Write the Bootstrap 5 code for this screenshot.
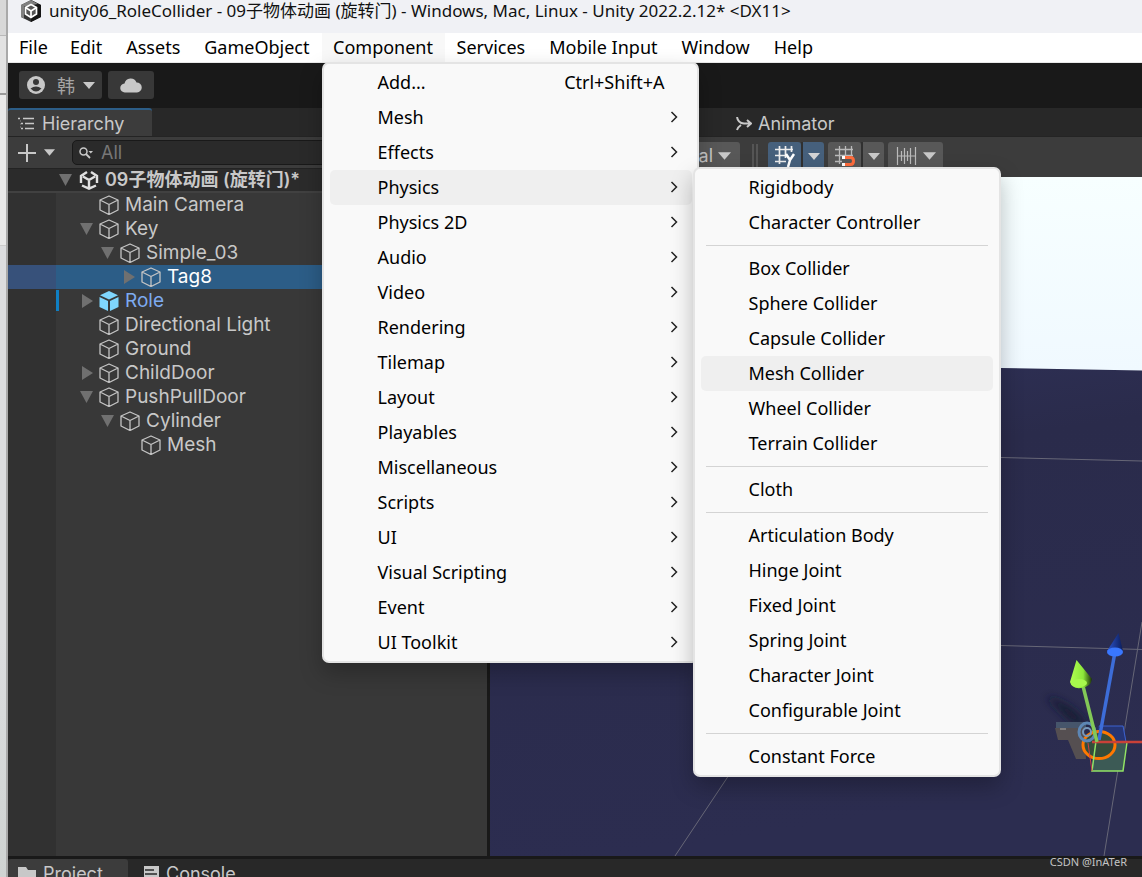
<!DOCTYPE html>
<html lang="en">
<head>
<meta charset="utf-8">
<meta name="viewport" content="width=device-width, initial-scale=1">
<title>unity06_RoleCollider - Unity</title>
<link href="https://cdn.jsdelivr.net/npm/bootstrap@5.3.0/dist/css/bootstrap.min.css" rel="stylesheet">
<style>
  body { font-family: "Noto Sans", "Noto Sans CJK SC", sans-serif; font-size: 18px; line-height: 24px; color: #000; background: #dcdddd; }
  .desktop-edge { width: 8px; background: linear-gradient(90deg, transparent 6px, #a9a9a9 6px), linear-gradient(#d8d8d8 0 35px, #b9b9b9 35px 36px, #e2e2e2 36px 93px, #999 93px 95px, #e9e9e9 95px 245px, #ccc 245px 246px, #dcdddf 246px 640px, #cfd3d2); }
  .editor { background: #191919; color: #c8c8c8; min-width: 0; }
  .titlebar { height: 33px; background: #f0f1f5; color: #111; font-size: 17px; padding: 0 12px 12px 12px; gap: 7px; }
  .menubar { height: 30px; background: #fff; border-bottom: 1px solid #e8e8e8; z-index: 10; }
  .menubar > li { position: relative; }
  .menubar > li > .menu-title { height: 29px; line-height: 24px; padding: 0 12px 2px; border: 0; background: none; color: #000; white-space: nowrap; }
  .menubar > li > .menu-title.active { background: #f8f8f8; width: 123px; padding: 0 11px 2px; }
  .menubar > .menu-first { width: 50px; }
  .menubar > .menu-first > .menu-title { padding: 0 11px 2px; }
  .popup { background: #f9f9f9; border: 2px solid #e4e4e4; border-radius: 7px; box-shadow: 0 10px 22px rgba(0,0,0,.25); margin: 0; list-style: none; color: #000; position: absolute; }
  .popup-main { top: 29px; left: 0; width: 377px; padding: 1px 5px 1px 6px; }
  .popup-sub { top: -3px; left: 100%; width: 308px; margin-left: 1px; padding: 1px 6px; }
  .popup li { position: relative; }
  .popup .entry { display: flex; align-items: center; justify-content: space-between; width: 100%; height: 35px; border: 0; border-radius: 5px; background: none; color: #000; padding: 0 14px 2px 48px; text-align: left; }
  .popup .entry.on { background: #efefef; }
  .popup .keys { margin-right: 13px; }
  .popup hr { margin: 5px 5px; border: 0; border-top: 1px solid #d4d4d4; opacity: 1; }
  .strip { height: 45px; padding: 8px 11px 8px 11px; gap: 6px; }
  .dark-btn { height: 28px; background: #383838; border: 0; border-radius: 3px; color: #a5a5a5; padding: 0 7px 0 8px; font-family: "Noto Sans CJK SC", sans-serif; }
  .cloud-btn { width: 46px; padding: 0; }
  .panes { gap: 3px; min-height: 0; }
  .ui-font { font-family: Inter, "Noto Sans CJK SC", sans-serif; }
  .hierarchy { width: 479px; background: #383838; }
  .tab-row { height: 28px; background: #282828; }
  .tab-row button { border: 0; background: none; color: #c8c8c8; padding: 3px 10px 0; gap: 7px; height: 28px; }
  .tab-row .current { background: #3c3c3c; border-top: 2px solid #2c5d87; border-radius: 3px 3px 0 0; width: 144px; padding-top: 2px; }
  .tool-row { height: 33px; background: #3c3c3c; border-top: 1px solid #242424; border-bottom: 1px solid #232323; padding-left: 10px; }
  .plain-btn { border: 0; background: none; padding: 0; color: #c8c8c8; }
  .search-box { height: 25px; background: #2a2a2a; border: 1px solid #191919; border-radius: 5px; margin-left: 17px; padding-left: 6px; }
  .search-box input { border: 0; background: none; outline: 0; color: #c8c8c8; width: 100%; padding: 0; height: 20px; }
  .search-box input::placeholder { color: #777; opacity: 1; }
  .tree { margin: 0; padding: 0; list-style: none; font-size: 19px; background: linear-gradient(90deg, #313131 48px, #383838 48px); }
  .tree li { display: flex; align-items: center; height: 24px; white-space: nowrap; --d: 0; padding-left: calc(68px + var(--d) * 21px); }
  .tree li span { margin-left: 6px; }
  .tree .d2 { --d: 1; } .tree .d3 { --d: 2; }
  .tree svg { flex: none; }
  .tree .arrow { width: 20px; height: 14px; fill: #707070; }
  .tree .arrow + svg { margin-left: 3px; }
  .tree .scene-head { background: #2b2b2b; border-bottom: 2px solid #414141; font-weight: 600; font-size: 18px; padding-left: 47px; }
  .tree .scene-head .arrow + svg { margin-left: 4px; }
  .tree .picked { background: linear-gradient(90deg, #37517a 48px, #2c5d87 48px); color: #fff; }
  .tree .prefab { color: #7eabf0; background: linear-gradient(#0f7fc3, #0f7fc3) 48px 1px / 3px 21px no-repeat; }
  .scene-tabs { padding-left: 236px; }
  .scene-tabs button { gap: 6px; }
  .scene-tools { height: 41px; background: #3c3c3c; border-top: 1px solid #242424; padding: 5px 0 0 150px; }
  .scene-tools button { height: 28px; border: 0; border-radius: 3px; background: #585858; color: #c8c8c8; padding: 0; display: flex; align-items: center; justify-content: center; }
  .scene-tools .blue { background: #46607c; }
  .scene-tools .w-local { width: 100px; gap: 5px; justify-content: flex-end; padding-right: 9px; }
  .w-icon { width: 33px; }
  .scene-tools .w-drop { width: 23px; border-left: 2px solid #303030; border-radius: 0 3px 3px 0; }
  .w-ruler { width: 55px; gap: 6px; }
  .grip { width: 6px; height: 24px; border: 1px solid #555; border-width: 0 2px; margin: 2px 10px 0 12px; }
  .viewport { min-height: 0; background: #2c2d50; }
  .viewport svg { width: 100%; height: 100%; display: block; }
  .dock { height: 21px; border-top: 3px solid #191919; background: #282828; }
  .dock button { border: 0; background: none; color: #c8c8c8; height: 30px; padding: 0 10px; gap: 7px; }
  .dock .current { background: #3c3c3c; border-radius: 3px 3px 0 0; width: 120px; }
  .credit { right: 15px; bottom: 5px; font: 11px/20px "Noto Sans", sans-serif; color: #c4c4c4; }
</style>
</head>
<body class="d-flex vh-100 overflow-hidden">
<svg class="d-none">
  <symbol id="cube" viewBox="0 0 20 20"><path d="M10 1 19 5v10l-9 4.500L1 15V5zM1 5l9 4.500L19 5M10 9.500v10" fill="none" stroke="#c4c4c4" stroke-width="1.300" stroke-linejoin="round"/></symbol>
  <symbol id="down" viewBox="0 0 12 7"><path d="M0 0h12L6 7z"/></symbol>
  <symbol id="open" viewBox="0 0 20 14"><path d="M4 1h13l-6.500 12z"/></symbol>
  <symbol id="closed" viewBox="0 0 20 14"><path d="M6 0v14l11-7z"/></symbol>
  <symbol id="chev" viewBox="0 0 8 12"><path d="m1.500 1 5 5-5 5" fill="none" stroke="#222" stroke-width="1.500"/></symbol>
  <symbol id="unity" viewBox="0 0 20 20"><path d="M10 10v8M10 10 4 6.500M10 10l6-3.500M2 13V6l6-4M18 13V6l-6-4M3 15.500l7 3.200 7-3.200" fill="none" stroke="#e0e0e0" stroke-width="2.400"/></symbol>
</svg>
<div class="desktop-edge flex-shrink-0"></div>
<div class="editor flex-grow-1 d-flex flex-column">
  <header class="titlebar d-flex align-items-center flex-shrink-0">
    <svg width="22" height="24" viewBox="0 0 22 24"><path d="M11 1 21 6v12l-10 5L1 18V6z" fill="#333"/><path d="M11 1 21 6v12l-10 5z" fill="#151515"/><path d="M11 1 1 6v12l3 1.500V7.500L18 5z" fill="#808080"/><path d="m11 5.500 5.500 3v6.500L11 18.500 5.500 15V8.500z" fill="#555" stroke="#fff" stroke-width="1.700"/><path d="m5.500 8.500 5.500 3.500 5.500-3.500M11 12v6" fill="none" stroke="#fff" stroke-width="1.700"/></svg>
    <span class="text-nowrap">unity06_RoleCollider - 09子物体动画 (旋转门) - Windows, Mac, Linux - Unity 2022.2.12* &lt;DX11&gt;</span>
  </header>
  <ul class="menubar d-flex list-unstyled m-0 flex-shrink-0 position-relative">
    <li class="menu-first"><button class="menu-title">File</button></li>
    <li><button class="menu-title">Edit</button></li>
    <li><button class="menu-title">Assets</button></li>
    <li><button class="menu-title">GameObject</button></li>
    <li><button class="menu-title active">Component</button>
      <ul class="popup popup-main">
        <li><button class="entry">Add... <span class="keys">Ctrl+Shift+A</span></button></li>
        <li><button class="entry">Mesh <svg width="8" height="12"><use href="#chev"/></svg></button></li>
        <li><button class="entry">Effects <svg width="8" height="12"><use href="#chev"/></svg></button></li>
        <li><button class="entry on">Physics <svg width="8" height="12"><use href="#chev"/></svg></button>
          <ul class="popup popup-sub">
            <li><button class="entry">Rigidbody</button></li>
            <li><button class="entry">Character Controller</button></li>
            <li><hr></li>
            <li><button class="entry">Box Collider</button></li>
            <li><button class="entry">Sphere Collider</button></li>
            <li><button class="entry">Capsule Collider</button></li>
            <li><button class="entry on">Mesh Collider</button></li>
            <li><button class="entry">Wheel Collider</button></li>
            <li><button class="entry">Terrain Collider</button></li>
            <li><hr></li>
            <li><button class="entry">Cloth</button></li>
            <li><hr></li>
            <li><button class="entry">Articulation Body</button></li>
            <li><button class="entry">Hinge Joint</button></li>
            <li><button class="entry">Fixed Joint</button></li>
            <li><button class="entry">Spring Joint</button></li>
            <li><button class="entry">Character Joint</button></li>
            <li><button class="entry">Configurable Joint</button></li>
            <li><hr></li>
            <li><button class="entry">Constant Force</button></li>
          </ul>
        </li>
        <li><button class="entry">Physics 2D <svg width="8" height="12"><use href="#chev"/></svg></button></li>
        <li><button class="entry">Audio <svg width="8" height="12"><use href="#chev"/></svg></button></li>
        <li><button class="entry">Video <svg width="8" height="12"><use href="#chev"/></svg></button></li>
        <li><button class="entry">Rendering <svg width="8" height="12"><use href="#chev"/></svg></button></li>
        <li><button class="entry">Tilemap <svg width="8" height="12"><use href="#chev"/></svg></button></li>
        <li><button class="entry">Layout <svg width="8" height="12"><use href="#chev"/></svg></button></li>
        <li><button class="entry">Playables <svg width="8" height="12"><use href="#chev"/></svg></button></li>
        <li><button class="entry">Miscellaneous <svg width="8" height="12"><use href="#chev"/></svg></button></li>
        <li><button class="entry">Scripts <svg width="8" height="12"><use href="#chev"/></svg></button></li>
        <li><button class="entry">UI <svg width="8" height="12"><use href="#chev"/></svg></button></li>
        <li><button class="entry">Visual Scripting <svg width="8" height="12"><use href="#chev"/></svg></button></li>
        <li><button class="entry">Event <svg width="8" height="12"><use href="#chev"/></svg></button></li>
        <li><button class="entry">UI Toolkit <svg width="8" height="12"><use href="#chev"/></svg></button></li>
      </ul>
    </li>
    <li><button class="menu-title">Services</button></li>
    <li><button class="menu-title">Mobile Input</button></li>
    <li><button class="menu-title">Window</button></li>
    <li><button class="menu-title">Help</button></li>
  </ul>

  <div class="strip d-flex flex-shrink-0">
    <button class="dark-btn d-flex align-items-center">
      <svg width="18" height="18" viewBox="0 0 18 18"><circle cx="9" cy="9" r="9" fill="#c8c8c8"/><circle cx="9" cy="6" r="3" fill="#383838"/><path d="M3.500 12.500q5.500-4 11 0-5.500 6-11 0" fill="#383838"/></svg>
      <span class="ms-2 ps-1 me-2">韩</span>
      <svg width="12" height="7" fill="#c8c8c8"><use href="#down"/></svg>
    </button>
    <button class="dark-btn cloud-btn d-flex align-items-center justify-content-center" aria-label="Cloud">
      <svg width="22" height="16" viewBox="0 0 22 16"><path d="M5 15.500A4.500 4.500 0 0 1 4.500 6.500 6.300 6.300 0 0 1 16.500 5.500 5 5 0 0 1 17 15.500z" fill="#c8c8c8"/></svg>
    </button>
  </div>

  <main class="panes d-flex flex-grow-1 ui-font">
    <section class="hierarchy flex-shrink-0 d-flex flex-column">
      <div class="tab-row flex-shrink-0">
        <button class="current d-flex align-items-center">
          <svg width="17" height="14" viewBox="0 0 17 14"><path d="M0 1.500h2M3 6.500h2M3 11.500h2M5 1.500h11M7 6.500h9M7 11.500h9" stroke="#c8c8c8" stroke-width="1.500"/><path d="M2.500 3.500v9" stroke="#888" stroke-dasharray="1 2"/></svg>Hierarchy
        </button>
      </div>
      <div class="tool-row d-flex align-items-center flex-shrink-0">
        <button class="plain-btn d-flex align-items-center" aria-label="Create"><svg width="18" height="18" viewBox="0 0 18 18"><path d="M9 0v18M0 9h18" stroke="#c8c8c8" stroke-width="2"/></svg><svg class="ms-2" width="11" height="7" fill="#c8c8c8"><use href="#down"/></svg></button>
        <label class="search-box flex-grow-1 d-flex align-items-center">
          <svg class="me-2 flex-shrink-0" width="14" height="12" viewBox="0 0 14 12"><circle cx="4.500" cy="4.500" r="3.500" fill="none" stroke="#c8c8c8" stroke-width="1.500"/><path d="m7 7 4 4" stroke="#c8c8c8" stroke-width="1.800"/><path d="M9.500 4H14l-2.200 2.500z" fill="#c8c8c8"/></svg>
          <input type="text" placeholder="All" aria-label="Search hierarchy">
        </label>
      </div>
      <ul class="tree flex-grow-1">
        <li class="scene-head"><svg class="arrow"><use href="#open"/></svg><svg width="20" height="20"><use href="#unity"/></svg><span>09子物体动画 (旋转门)*</span></li>
        <li><svg class="arrow"></svg><svg width="20" height="20"><use href="#cube"/></svg><span>Main Camera</span></li>
        <li><svg class="arrow"><use href="#open"/></svg><svg width="20" height="20"><use href="#cube"/></svg><span>Key</span></li>
        <li class="d2"><svg class="arrow"><use href="#open"/></svg><svg width="20" height="20"><use href="#cube"/></svg><span>Simple_03</span></li>
        <li class="d3 picked"><svg class="arrow"><use href="#closed"/></svg><svg width="20" height="20"><use href="#cube"/></svg><span>Tag8</span></li>
        <li class="prefab"><svg class="arrow"><use href="#closed"/></svg><svg width="20" height="20" viewBox="0 0 20 20"><path d="m10 0 9 4.300-9 4.200-9-4.200zM.500 6 9 10v10L.500 16zM19.500 6 11 10v10l8.500-4z" fill="#7fd6fd"/></svg><span>Role</span></li>
        <li><svg class="arrow"></svg><svg width="20" height="20"><use href="#cube"/></svg><span>Directional Light</span></li>
        <li><svg class="arrow"></svg><svg width="20" height="20"><use href="#cube"/></svg><span>Ground</span></li>
        <li><svg class="arrow"><use href="#closed"/></svg><svg width="20" height="20"><use href="#cube"/></svg><span>ChildDoor</span></li>
        <li><svg class="arrow"><use href="#open"/></svg><svg width="20" height="20"><use href="#cube"/></svg><span>PushPullDoor</span></li>
        <li class="d2"><svg class="arrow"><use href="#open"/></svg><svg width="20" height="20"><use href="#cube"/></svg><span>Cylinder</span></li>
        <li class="d3"><svg class="arrow"></svg><svg width="20" height="20"><use href="#cube"/></svg><span>Mesh</span></li>
      </ul>
    </section>

    <section class="flex-grow-1 d-flex flex-column overflow-hidden">
      <div class="tab-row scene-tabs flex-shrink-0">
        <button class="d-flex align-items-center"><svg width="16" height="14" viewBox="0 0 16 14"><path d="M1 0q1 6 7 6.500h6M1 13q1-3 4-5M11 3l4 3.500-4 3.500" fill="none" stroke="#c8c8c8" stroke-width="2"/></svg>Animator</button>
      </div>
      <div class="scene-tools d-flex align-items-start flex-shrink-0">
        <button class="w-local">Local <svg width="13" height="8" fill="#c8c8c8"><use href="#down"/></svg></button>
        <div class="grip"></div>
        <button class="blue w-icon" aria-label="Grid axis"><svg width="22" height="22" viewBox="0 0 22 22"><path d="M5.500 1v18M11.500 1v12M17.500 1v6M1 4.500h18M1 10.500h11M1 16.500h11" stroke="#eee" stroke-width="1.700"/><path d="m12 9 4 6 4-6M16 15l-2 7" fill="none" stroke="#fff" stroke-width="2.500"/></svg></button>
        <button class="blue w-drop" aria-label="Grid options"><svg width="12" height="7" fill="#d4d4d4"><use href="#down"/></svg></button>
        <button class="w-icon ms-1" aria-label="Grid snapping"><svg width="22" height="22" viewBox="0 0 22 22"><path d="M5.500 1v18M11.500 1v9M17.500 1v9M1 4.500h18M1 10.500h18M1 16.500h7" stroke="#bbb" stroke-width="1.300"/><path d="M11 12.500h5.500q3 0 3 3.500t-3 3.500H11" fill="none" stroke="#ff6c3c" stroke-width="3"/><path d="M8 11h3v3H8zM8 18h3v3H8z" fill="#fff"/></svg></button>
        <button class="w-drop" aria-label="Snap options"><svg width="12" height="7" fill="#c8c8c8"><use href="#down"/></svg></button>
        <button class="w-ruler ms-1" aria-label="Increment snapping"><svg width="21" height="20" viewBox="0 0 21 20"><path d="M1.500 1v18M5.500 5v10M8.500 2v16M11.500 5v10M14.500 2v16M19.500 1v18M1 10h19" stroke="#bbb" stroke-width="1.200"/></svg><svg width="13" height="8" fill="#c8c8c8"><use href="#down"/></svg></button>
      </div>
      <div class="viewport flex-grow-1 overflow-hidden">
        <svg viewBox="490 177 652 679" preserveAspectRatio="xMaxYMid slice">
          <defs>
            <linearGradient id="sky" x2="0" y2="1"><stop stop-color="#f7ffff"/><stop offset="1" stop-color="#f0f9ff"/></linearGradient>
            <linearGradient id="floor" x2=".2" y2="1"><stop stop-color="#30325a"/><stop offset=".3" stop-color="#2a2b4b"/><stop offset="1" stop-color="#2c2d50"/></linearGradient>
            <linearGradient id="green"><stop stop-color="#b2ff52"/><stop offset=".6" stop-color="#8de83a"/><stop offset="1" stop-color="#1b3008"/></linearGradient>
            <linearGradient id="blue"><stop stop-color="#2c55cf"/><stop offset="1" stop-color="#0d1d58"/></linearGradient>
            <filter id="soft" x="-50%" y="-50%" width="200%" height="200%"><feGaussianBlur stdDeviation="4"/></filter>
          </defs>
          <path d="M490 177h652v194H490z" fill="url(#sky)"/>
          <path d="M490 361 1001 368 1142 370.500V856H490z" fill="url(#floor)"/>
          <path d="M1001 457.500 1142 461M1001 645.500 1142 649.500M1142 622 1104 856M737 763 675 856" fill="none" stroke="#676777"/>
          <path d="M1046 697q24 4 44 30l-18-5z" fill="#161b32" filter="url(#soft)"/>
          <path d="M1056 722h30v7h-30z" fill="#46556b"/>
          <path d="M1055 728h29l2 31h-10l-8-19h-10z" fill="#554f51"/>
          <path d="M1060 729h6" stroke="#aaa"/>
          <path d="M1096 741h30l-3 30h-31z" fill="#3c5a55"/>
          <path d="M1098 726h26l2 15-30 1z" fill="#263574"/>
          <ellipse cx="1099" cy="745" rx="16" ry="13.500" fill="#354c3a" stroke="#ff7800" stroke-width="3"/>
          <path d="M1099 726h24l3 16" fill="none" stroke="#3d62cf"/>
          <path d="m1096 741-4 30h31l4-29" fill="none" stroke="#91e465" stroke-width="1.500"/>
          <path d="m1088 743 4 28" stroke="#c94148"/>
          <path d="M1092 742h50" stroke="#c94138" stroke-width="2.500"/>
          <ellipse cx="1087" cy="732" rx="8" ry="9" fill="none" stroke="#5d86b4" stroke-width="3"/><circle cx="1087" cy="732" r="4" fill="none" stroke="#7798bc" stroke-width="2"/>
          <path d="m1115 652-16 88" stroke="#3d6dd8" stroke-width="3.500"/>
          <path d="m1083 686 14 56" stroke="#83c957" stroke-width="3.500"/>
          <path d="M1118.500 633 1107 651q8 3 16 0z" fill="url(#blue)"/><ellipse cx="1115" cy="652" rx="8" ry="4.500" fill="#3977ff"/>
          <path d="m1076.500 660-6.500 22q2 7 11 6 10-1 11-9z" fill="url(#green)"/>
          <ellipse cx="1079" cy="683" rx="8" ry="4" fill="#a7f84d"/>
        </svg>
      </div>
    </section>
  </main>

  <footer class="dock d-flex flex-shrink-0 ui-font position-relative">
    <button class="current d-flex align-items-center"><svg width="18" height="16" viewBox="0 0 18 16"><path d="M0 1h8l2 3h8v12H0z" fill="#c8c8c8"/></svg>Project</button>
    <button class="d-flex align-items-center ps-3"><svg width="15" height="16" viewBox="0 0 15 16"><path d="M0 0h15v16H0z" fill="#c8c8c8"/><path d="M1 4h9M1 8h12M1 12h10" stroke="#282828" stroke-width="1.500"/></svg>Console</button>
    <span class="credit position-absolute">CSDN @InATeR</span>
  </footer>
</div>
<script src="https://cdn.jsdelivr.net/npm/bootstrap@5.3.0/dist/js/bootstrap.bundle.min.js"></script>
</body>
</html>
